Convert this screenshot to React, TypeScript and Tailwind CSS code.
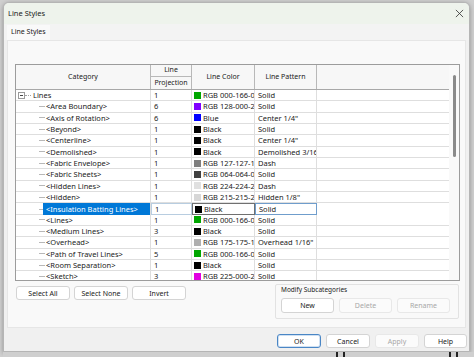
import React from 'react';

type Row = {
  name: string;
  proj: string;
  color: string;
  colorName: string;
  pattern: string;
  parent?: boolean;
  selected?: boolean;
};

const rows: Row[] = [
  { name: 'Lines', proj: '1', color: '#00a600', colorName: 'RGB 000-166-000', pattern: 'Solid', parent: true },
  { name: '<Area Boundary>', proj: '6', color: '#8000ff', colorName: 'RGB 128-000-255', pattern: 'Solid' },
  { name: '<Axis of Rotation>', proj: '6', color: '#0000ff', colorName: 'Blue', pattern: 'Center 1/4"' },
  { name: '<Beyond>', proj: '1', color: '#000000', colorName: 'Black', pattern: 'Solid' },
  { name: '<Centerline>', proj: '1', color: '#000000', colorName: 'Black', pattern: 'Center 1/4"' },
  { name: '<Demolished>', proj: '1', color: '#000000', colorName: 'Black', pattern: 'Demolished 3/16"' },
  { name: '<Fabric Envelope>', proj: '1', color: '#7f7f7f', colorName: 'RGB 127-127-127', pattern: 'Dash' },
  { name: '<Fabric Sheets>', proj: '1', color: '#404040', colorName: 'RGB 064-064-064', pattern: 'Solid' },
  { name: '<Hidden Lines>', proj: '1', color: '#e0e0e0', colorName: 'RGB 224-224-224', pattern: 'Dash' },
  { name: '<Hidden>', proj: '1', color: '#d7d7d7', colorName: 'RGB 215-215-215', pattern: 'Hidden 1/8"' },
  { name: '<Insulation Batting Lines>', proj: '1', color: '#000000', colorName: 'Black', pattern: 'Solid', selected: true },
  { name: '<Lines>', proj: '1', color: '#00a600', colorName: 'RGB 000-166-000', pattern: 'Solid' },
  { name: '<Medium Lines>', proj: '3', color: '#000000', colorName: 'Black', pattern: 'Solid' },
  { name: '<Overhead>', proj: '1', color: '#afafaf', colorName: 'RGB 175-175-175', pattern: 'Overhead 1/16"' },
  { name: '<Path of Travel Lines>', proj: '5', color: '#00a600', colorName: 'RGB 000-166-000', pattern: 'Solid' },
  { name: '<Room Separation>', proj: '1', color: '#000000', colorName: 'Black', pattern: 'Solid' },
  { name: '<Sketch>', proj: '3', color: '#e100e1', colorName: 'RGB 225-000-225', pattern: 'Solid' },
];

const cols = 'grid grid-cols-[135px_41px_63px_62px_132px]';

const TableRow: React.FC<{ row: Row }> = ({ row }) => (
  <div className={`${cols} h-[11.33px] shrink-0 border-b border-[#dedede] leading-[10px]`}>
    <div className="relative flex items-center border-r border-[#dedede] overflow-hidden">
      {row.parent ? (
        <>
          <span className="ml-[2px] flex h-[7px] w-[7px] items-center justify-center border border-[#9a9a9a] bg-white">
            <span className="h-px w-[3px] bg-[#444]" />
          </span>
          <span className="w-[6px] border-t border-dotted border-[#a0a0a0]" />
          <span className="ml-[2px]">{row.name}</span>
        </>
      ) : (
        <>
          <span className="ml-[23px] w-[6px] border-t border-[#b8b8b8]" />
          {row.selected ? (
            <span className="ml-[-2px] flex h-full flex-1 items-center bg-[#0078d7] pl-[3px] text-white">
              {row.name}
            </span>
          ) : (
            <span className="ml-px">{row.name}</span>
          )}
        </>
      )}
    </div>
    <div
      className={`flex items-center border-r pl-[3px] ${
        row.selected ? 'border border-[#b8cde0] bg-white' : 'border-[#dedede]'
      }`}
    >
      {row.proj}
    </div>
    <div
      className={`flex items-center overflow-hidden whitespace-nowrap border-r pl-[2px] ${
        row.selected ? 'border border-[#707070]' : 'border-[#dedede]'
      }`}
    >
      <span className="mr-[2px] h-[7px] w-[7px] shrink-0" style={{ backgroundColor: row.color }} />
      {row.colorName}
    </div>
    <div
      className={`flex items-center overflow-hidden whitespace-nowrap pl-[3px] ${
        row.selected ? 'border border-[#6f9dcc]' : 'border-r border-[#dedede]'
      }`}
    >
      {row.pattern}
    </div>
    <div className="bg-white" />
  </div>
);

const Btn: React.FC<{ label: string; disabled?: boolean; primary?: boolean; className?: string }> = ({
  label,
  disabled,
  primary,
  className = '',
}) => (
  <button
    className={`flex h-[14px] items-center justify-center rounded-[3px] border text-[7px] leading-none ${
      disabled
        ? 'border-[#e8e8e8] bg-[#fbfbfb] text-[#a8a8a8]'
        : primary
        ? 'border-[#4a86c5] bg-white text-[#1a1a1a] shadow-[inset_0_0_0_1px_#cfe0f2]'
        : 'border-[#d4d4d4] bg-white text-[#1a1a1a]'
    } ${className}`}
  >
    {label}
  </button>
);

export default function App() {
  return (
    <div
      className="flex h-[357px] w-[474px] flex-col bg-[#cfcfcf] pl-[3px] pt-[2px] text-[#1a1a1a]"
      style={{ fontFamily: '"Noto Sans", "Open Sans", sans-serif' }}
    >
      <div className="flex h-[350px] w-[467px] flex-col overflow-hidden rounded-t-[6px] border border-[#b5b5b5] bg-[#f0f0f0] shadow-[0_1px_4px_rgba(0,0,0,0.3)]">
        {/* title bar */}
        <div className="flex h-[21px] shrink-0 items-center justify-between bg-[#eef3ec] pl-[4px] pr-[4px]">
          <span className="text-[7.5px]">Line Styles</span>
          <svg width="9" height="9" viewBox="0 0 10 10" className="mr-[1px]">
            <path d="M1 1L9 9M9 1L1 9" stroke="#333" strokeWidth="0.9" />
          </svg>
        </div>
        {/* tabs */}
        <div className="flex h-[16px] shrink-0 items-end bg-[#f3f3f3] pl-[3px]">
          <div className="flex h-[15px] items-center bg-[#f9f9f9] px-[4px] text-[7px]">Line Styles</div>
        </div>
        {/* panel */}
        <div className="mx-[3px] flex h-[288px] shrink-0 flex-col border border-[#e6e6e6] bg-[#f9f9f9] px-[7px] pt-[23px]">
          {/* table */}
          <div className="flex h-[217px] w-[445px] shrink-0 overflow-hidden border border-[#9c9c9c] bg-white text-[7.5px]">
            <div className="flex w-[433px] flex-col overflow-hidden">
              <div
                className={`grid shrink-0 grid-cols-[135px_41px_63px_62px_132px] grid-rows-[12px_12px] border-b border-[#a8a8a8] bg-[#f7f7f7] text-[7px]`}
              >
                <div className="row-span-2 flex items-center justify-center border-r border-[#b8b8b8]">Category</div>
                <div className="flex items-center justify-center border-b border-r border-[#b8b8b8]">Line</div>
                <div className="row-span-2 flex items-center justify-center border-r border-[#b8b8b8]">Line Color</div>
                <div className="row-span-2 flex items-center justify-center border-r border-[#b8b8b8]">Line Pattern</div>
                <div className="row-span-2" />
                <div className="col-start-2 flex items-center justify-center border-r border-[#b8b8b8]">Projection</div>
              </div>
              {rows.map((r) => (
                <TableRow key={r.name + r.proj + r.pattern} row={r} />
              ))}
            </div>
            <div className="flex w-[10px] shrink-0 justify-center bg-[#f9f9f9] pt-[10px]">
              <div className="h-[82px] w-[3px] rounded-full bg-[#8a8a8a]" />
            </div>
          </div>
          {/* lower row */}
          <div className="mt-[3px] flex items-start justify-between">
            <div className="ml-px mt-[2px] flex gap-[4px]">
              <Btn label="Select All" className="w-[54px]" />
              <Btn label="Select None" className="w-[54px]" />
              <Btn label="Invert" className="w-[54px]" />
            </div>
            <div className="mr-[-1px] flex h-[35px] w-[184px] flex-col rounded-[2px] border border-[#e2e2e2] px-[5px]">
              <span className="mt-[1px] text-[6.5px] leading-[8px]">Modify Subcategories</span>
              <div className="mt-[4px] flex gap-[5px]">
                <Btn label="New" className="h-[15px] w-[53px]" />
                <Btn label="Delete" disabled className="h-[15px] w-[53px]" />
                <Btn label="Rename" disabled className="h-[15px] w-[53px]" />
              </div>
            </div>
          </div>
        </div>
        {/* footer */}
        <div className="flex flex-1 items-start justify-end gap-[5px] pr-[2px] pt-[6px]">
          <Btn label="OK" primary className="w-[44px]" />
          <Btn label="Cancel" className="w-[44px]" />
          <Btn label="Apply" disabled className="w-[44px]" />
          <Btn label="Help" className="w-[43px]" />
        </div>
      </div>
      <div className="flex h-[5px] shrink-0 bg-[#cfcfcf]">
        <span className="ml-[333px] h-full w-[2px] bg-[#222]" />
        <span className="ml-[5px] h-full w-[2px] bg-[#222]" />
        <span className="ml-[104px] h-full w-[2px] bg-[#222]" />
        <span className="ml-[5px] h-full w-[2px] bg-[#222]" />
      </div>
    </div>
  );
}
